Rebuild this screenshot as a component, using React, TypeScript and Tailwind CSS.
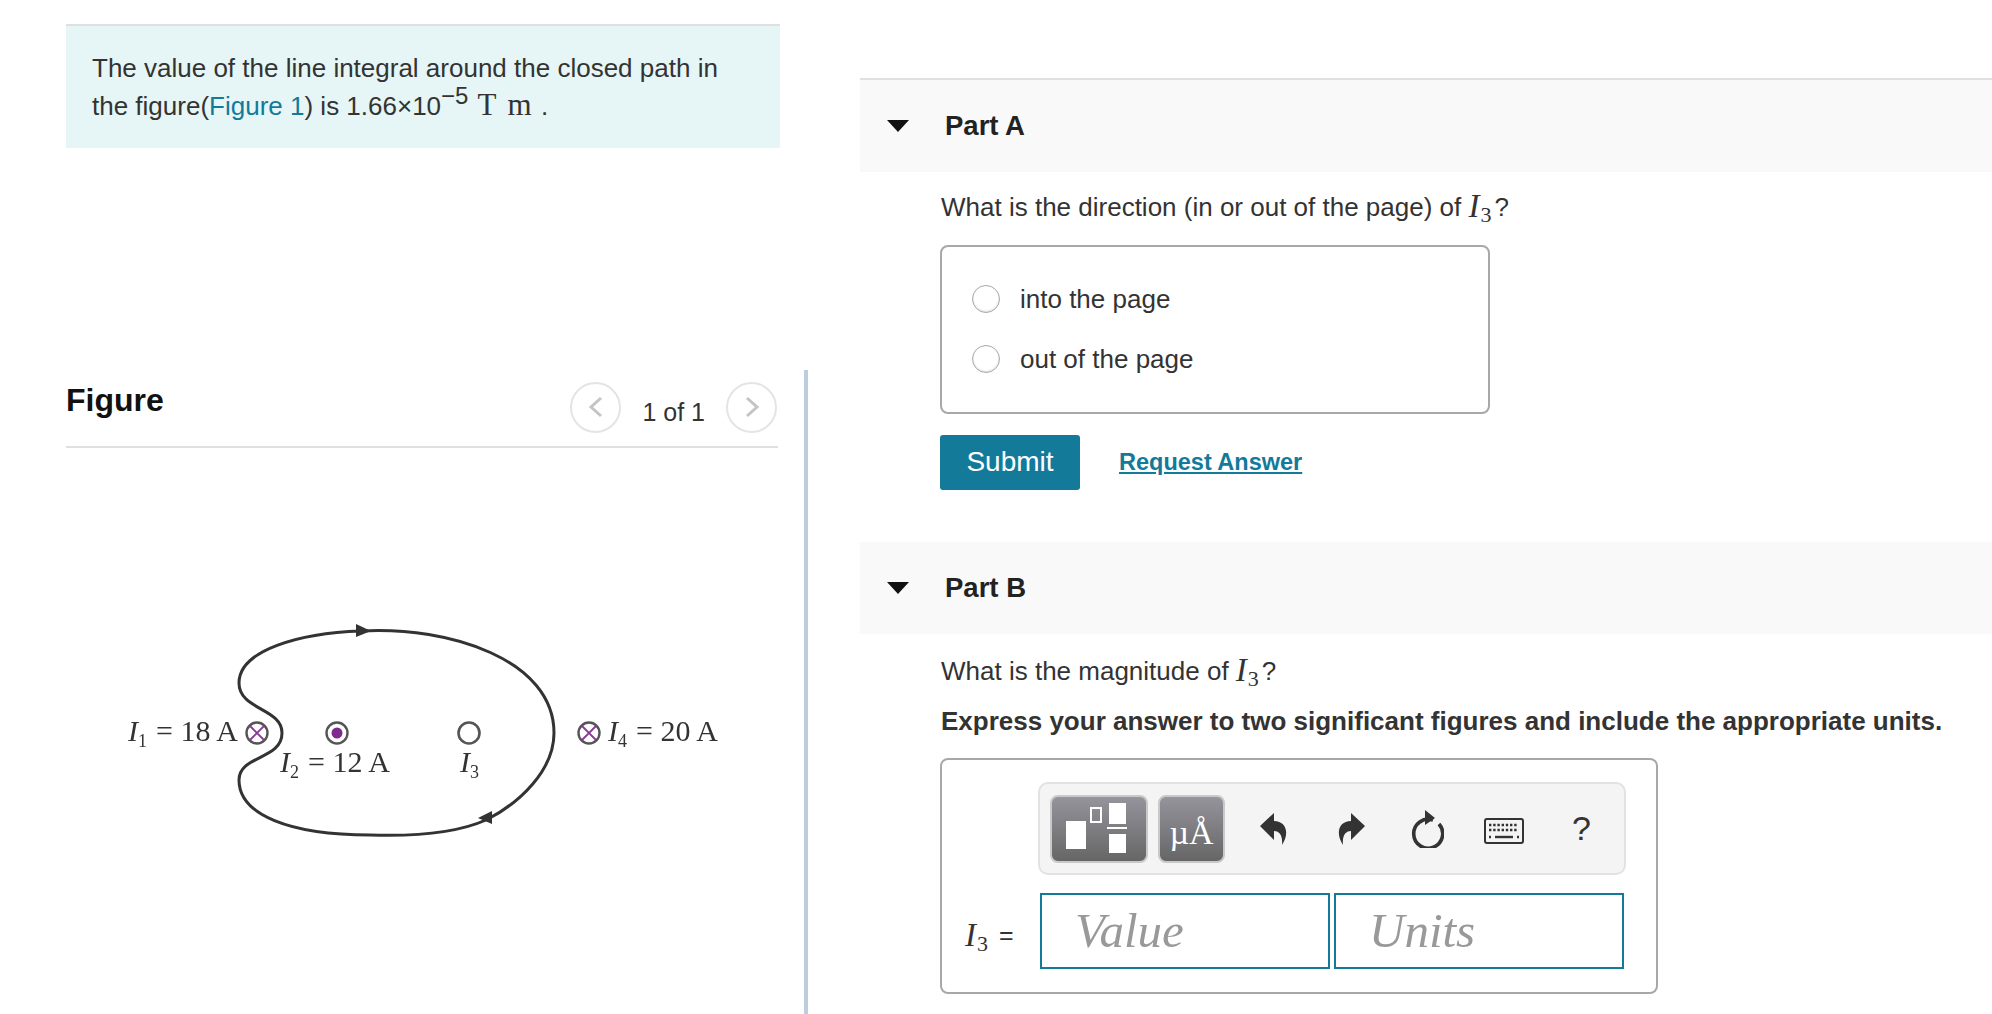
const sans = "font-['Liberation_Sans',Arial,sans-serif]";
const serif = "font-['Liberation_Serif','Times_New_Roman',serif]";

function Figure() {
  const ink = "#333";
  const label = { fontFamily: "'Liberation Serif', serif", fontSize: 30, fill: "#333" };
  const sub = { fontFamily: "'Liberation Serif', serif", fontSize: 18, fill: "#333" };
  return (
    <svg width="805" height="300" viewBox="0 600 805 300" className="block blur-[0.5px]">
      <path
        d="M361 631 C450 626 554 660 554 733 C554 770 520 803 486 820 C450 836 400 836 370 835 C290 835 239 815 239 780 C239 755 282 760 282 733 C282 708 239 710 239 683 C239 650 300 633 361 631 Z"
        fill="none"
        stroke={ink}
        strokeWidth="3"
      />
      <path d="M356 624 L371 631 L356 637 Z" fill={ink} />
      <path d="M478 818 L492 811 L492 824 Z" fill={ink} />

      <text x="128" y="741" {...label} fontStyle="italic">I</text>
      <text x="138" y="747" {...sub}>1</text>
      <text x="156" y="741" {...label}>= 18 A</text>
      <circle cx="257" cy="733" r="10.5" fill="#fff" stroke="#555" strokeWidth="2.4" />
      <path d="M250 726 L264 740 M264 726 L250 740" stroke="#8a3b97" strokeWidth="1.8" />

      <circle cx="337" cy="733" r="10.5" fill="#fff" stroke="#555" strokeWidth="2.4" />
      <circle cx="337" cy="733" r="5.5" fill="#7d2b8f" />

      <text x="280" y="772" {...label} fontStyle="italic">I</text>
      <text x="290" y="778" {...sub}>2</text>
      <text x="308" y="772" {...label}>= 12 A</text>

      <circle cx="469" cy="733" r="10.5" fill="#fff" stroke="#555" strokeWidth="2.6" />
      <text x="460" y="772" {...label} fontStyle="italic">I</text>
      <text x="470" y="778" {...sub}>3</text>

      <circle cx="589" cy="733" r="10.5" fill="#fff" stroke="#555" strokeWidth="2.4" />
      <path d="M582 726 L596 740 M596 726 L582 740" stroke="#8a3b97" strokeWidth="1.8" />
      <text x="608" y="741" {...label} fontStyle="italic">I</text>
      <text x="618" y="747" {...sub}>4</text>
      <text x="636" y="741" {...label}>= 20 A</text>
    </svg>
  );
}

function Pager() {
  return (
    <div className="mb-[8px] mr-[1px] flex items-center">
      <div className="flex h-[51px] w-[51px] items-center justify-center rounded-full border-2 border-[#e4e4e4]">
        <svg width="16" height="24" viewBox="0 0 16 24"><path d="M13 3 L3 12 L13 21" fill="none" stroke="#c4c4c4" strokeWidth="3" /></svg>
      </div>
      <span className="mx-[21px] mt-[12px] text-[25px] text-[#333]">1 of 1</span>
      <div className="flex h-[51px] w-[51px] items-center justify-center rounded-full border-2 border-[#e4e4e4]">
        <svg width="16" height="24" viewBox="0 0 16 24"><path d="M3 3 L13 12 L3 21" fill="none" stroke="#c4c4c4" strokeWidth="3" /></svg>
      </div>
    </div>
  );
}

function PartHeader({ name }: { name: string }) {
  return (
    <div className="flex h-[92px] items-center bg-[#f9f9f9]">
      <div className="ml-[27px] h-0 w-0 border-x-[11px] border-t-[12px] border-x-transparent border-t-[#111]" />
      <span className="ml-[36px] text-[27.5px] font-bold text-[#222]">{name}</span>
    </div>
  );
}

function I3() {
  return (
    <span className={`${serif} whitespace-nowrap text-[#333]`}>
      <i className="text-[33px]">I</i>
      <span className="relative top-[5px] ml-[1px] text-[22px]">3</span>
    </span>
  );
}

function Radio({ label }: { label: string }) {
  return (
    <div className="flex h-[60px] items-center">
      <div className="h-[28px] w-[28px] rounded-full border border-[#a8a8a8] bg-white shadow-[inset_0_-1px_2px_#ddd]" />
      <span className="ml-[20px] text-[26px] text-[#333]">{label}</span>
    </div>
  );
}

function Toolbar() {
  return (
    <div className="flex h-[93px] w-[588px] items-center rounded-[10px] border-2 border-[#e2e2e2] bg-[#f4f4f4] pl-[10px]">
      <div className="relative h-[68px] w-[98px] rounded-[8px] border-2 border-[#c9c9c9] bg-gradient-to-b from-[#96949c] to-[#666]">
        <div className="absolute left-[14px] top-[24px] h-[28px] w-[20px] bg-white" />
        <div className="absolute left-[38px] top-[10px] h-[16px] w-[12px] border-2 border-white" />
        <div className="absolute left-[57px] top-[6px] h-[21px] w-[17px] bg-white" />
        <div className="absolute left-[55px] top-[30px] h-[2px] w-[20px] bg-white" />
        <div className="absolute left-[57px] top-[37px] h-[19px] w-[17px] bg-white" />
      </div>
      <div className={`${serif} relative ml-[10px] flex h-[68px] w-[67px] items-end justify-center rounded-[8px] border-2 border-[#c9c9c9] bg-gradient-to-b from-[#96949c] to-[#666] pb-[8px] text-[34px] leading-[40px] text-white`}>
        µÅ
      </div>
      <svg width="28" height="32" viewBox="0 0 28 32" className="ml-[35px]">
        <path d="M0 13 L14 0 V8 C26 8 30 20 22 32 C23 22 19 18 14 18 V27 Z" fill="#333" />
      </svg>
      <svg width="28" height="32" viewBox="0 0 28 32" className="ml-[49px]">
        <path d="M28 13 L14 0 V8 C2 8 -2 20 6 32 C5 22 9 18 14 18 V27 Z" fill="#333" />
      </svg>
      <svg width="34" height="38" viewBox="0 0 34 38" className="ml-[45px]">
        <path d="M23 10 A14.5 14.5 0 1 0 29 14" fill="none" stroke="#333" strokeWidth="3.6" />
        <path d="M15 0 L25 8 L15 15 Z" fill="#333" />
      </svg>
      <svg width="40" height="26" viewBox="0 0 40 26" className="ml-[40px] mt-[4px]">
        <rect x="1" y="1" width="38" height="24" rx="2" fill="#f4f4f4" stroke="#333" strokeWidth="2" />
        <path d="M5 7 H34 M5 12 H34" stroke="#333" strokeWidth="2.4" strokeDasharray="2.4 1.8" />
        <path d="M11 19 H29" stroke="#333" strokeWidth="2.4" />
        <path d="M5 19 H7 M33 19 H35" stroke="#333" strokeWidth="2.4" />
      </svg>
      <span className="mb-[2px] ml-[48px] text-[34px] leading-none text-[#333]">?</span>
    </div>
  );
}

export default function App() {
  return (
    <div className={`${sans} flex h-[1014px] w-[1992px] overflow-hidden bg-white text-[25px] text-[#333]`}>
      <div className="w-[804px] shrink-0">
        <div className="ml-[66px] mt-[24px] h-[124px] w-[714px] border-t-2 border-[#e0e0e0] bg-[#e6f6f6] pl-[26px] pr-[40px] pt-[23px] text-[26px] leading-[38px]">
          <p>
            The value of the line integral around the closed path in the figure(
            <span className="text-[#137a9a]">Figure 1</span>) is 1.66×10
            <span className="relative top-[-11px] text-[24px] leading-none">−5</span>
            <span className={`${serif} ml-[9px] text-[31px] leading-none tracking-[2px]`}>T m</span> .
          </p>
        </div>
        <div className="ml-[66px] mt-[228px] flex h-[72px] w-[712px] items-center justify-between border-b-2 border-[#e0e0e0]">
          <span className="pb-[22px] text-[32px] font-bold text-[#111]">Figure</span>
          <Pager />
        </div>
        <div className="mt-[152px]">
          <Figure />
        </div>
      </div>

      <div className="mt-[370px] h-[644px] w-[4px] shrink-0 bg-[#bccde0]" />

      <div className="ml-[52px] min-w-0 flex-1 pt-[78px]">
        <div className="border-t-2 border-[#e0e0e0]">
          <PartHeader name="Part A" />
        </div>
        <div className="pl-[80px]">
          <p className="mt-[15px] flex h-[40px] items-center pl-[1px] text-[26px]">
            What is the direction (in or out of the page) of&nbsp;<I3 /><span className="ml-[3px]">?</span>
          </p>
          <div className="mt-[18px] h-[169px] w-[550px] rounded-[8px] border-2 border-[#a8a8a8] px-[30px] py-[22px]">
            <Radio label="into the page" />
            <Radio label="out of the page" />
          </div>
          <div className="mt-[21px] flex items-center">
            <div className="flex h-[55px] w-[140px] items-center justify-center rounded-[3px] bg-[#147a9a] pb-[2px] text-[28px] text-white">
              Submit
            </div>
            <span className="ml-[39px] text-[23.5px] font-bold text-[#137a9a] underline">Request Answer</span>
          </div>
        </div>
        <div className="mt-[52px]">
          <PartHeader name="Part B" />
        </div>
        <div className="pl-[80px]">
          <p className="mt-[17px] flex h-[40px] items-center pl-[1px] text-[26px]">
            What is the magnitude of&nbsp;<I3 /><span className="ml-[3px]">?</span>
          </p>
          <p className="mt-[10px] h-[40px] pl-[1px] text-[26px] font-bold leading-[40px]">
            Express your answer to two significant figures and include the appropriate units.
          </p>
          <div className="mt-[17px] h-[236px] w-[718px] rounded-[8px] border-2 border-[#a8a8a8] pl-[96px] pt-[22px]">
            <Toolbar />
            <div className="relative ml-[2px] mt-[18px] flex">
              <div className="absolute left-[-75px] top-[18px] flex items-center">
                <I3 />
                <span className="ml-[11px] text-[25px]">=</span>
              </div>
              <div className={`${serif} flex h-[76px] w-[290px] items-center border-2 border-[#147a9a] pl-[33px] text-[49px] italic text-[#999]`}>
                Value
              </div>
              <div className={`${serif} ml-[4px] flex h-[76px] w-[290px] items-center border-2 border-[#147a9a] pl-[33px] text-[49px] italic text-[#999]`}>
                Units
              </div>
            </div>
          </div>
        </div>
      </div>
    </div>
  );
}
